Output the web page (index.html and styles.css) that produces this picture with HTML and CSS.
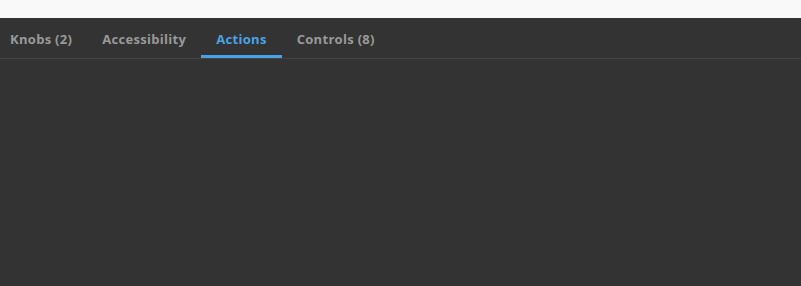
FILE: index.html
```html
<!DOCTYPE html>
<html lang="en">
<head>
  <meta charset="UTF-8">
  <title>Addons panel</title>
  <link rel="stylesheet" href="styles.css">
</head>
<body>
  <div class="topbar"></div>
  <div class="panel">
    <div class="tabs">
      <button class="tab first">Knobs (2)</button>
      <button class="tab">Accessibility</button>
      <button class="tab active">Actions</button>
      <button class="tab">Controls (8)</button>
    </div>
    <div class="content"></div>
  </div>
</body>
</html>
```
FILE: styles.css
```css
body {
  margin: 0;
  height: 286px;
  display: flex;
  flex-direction: column;
  background: #333;
  font-family: "Open Sans", "Noto Sans", sans-serif;
}

.topbar {
  height: 18px;
  background: #f9f9f9;
}

.panel {
  flex: 1;
  display: flex;
  flex-direction: column;
  background: #333;
}

.tabs {
  display: flex;
  height: 40px;
  border-bottom: 1px solid #444;
}

.tab {
  padding: 5px 15px 0;
  height: 40px;
  border: none;
  border-bottom: 3px solid transparent;
  margin-bottom: -1px;
  background: transparent;
  color: #999;
  font-family: inherit;
  font-size: 13px;
  font-weight: 700;
  letter-spacing: 0.3px;
  cursor: pointer;
}

.tab.first {
  padding-left: 10px;
}

.tab.active {
  color: #47a3e6;
  border-bottom-color: #47a3e6;
}

.content {
  flex: 1;
}
```
